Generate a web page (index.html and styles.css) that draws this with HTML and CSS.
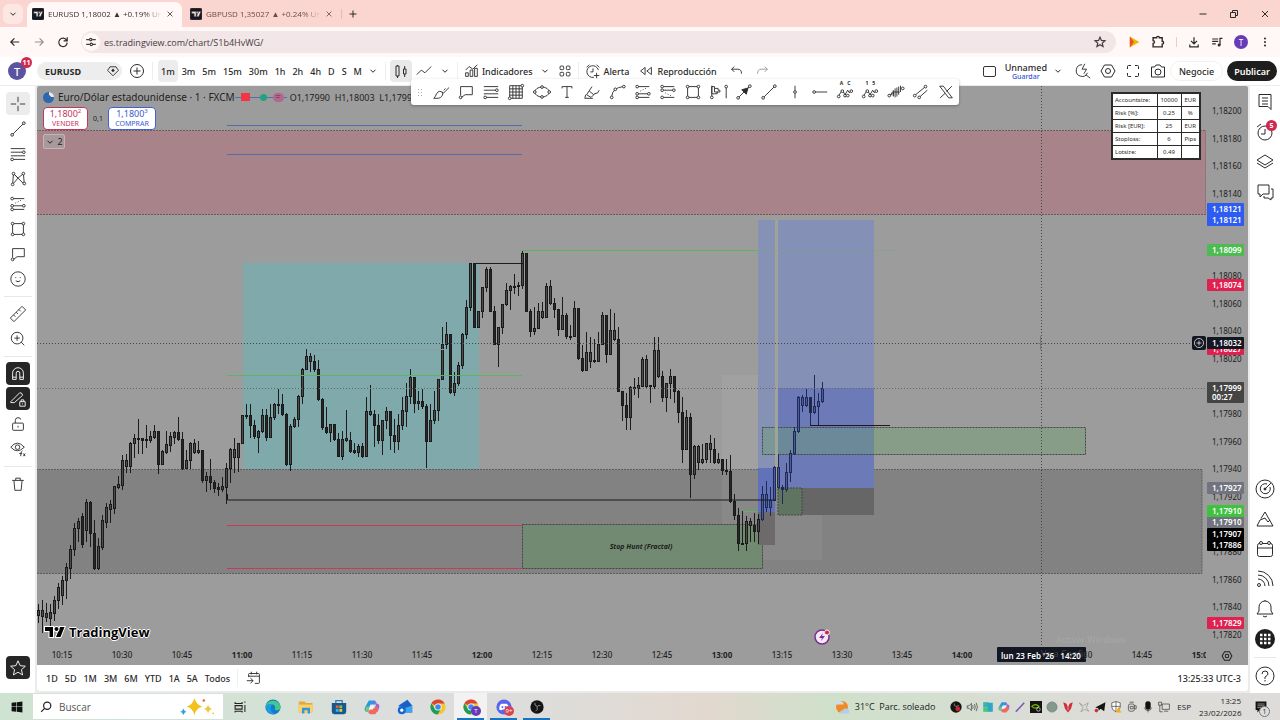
FILE: index.html
```html
<!DOCTYPE html>
<html lang="es">
<head>
    <meta charset="UTF-8">
    <meta name="viewport" content="width=device-width, initial-scale=1.0">
    <title>EURUSD 1,18002</title>
    <link rel="stylesheet" href="styles.css">
</head>
<body>
    <!-- Icon set, every symbol is drawn on a 20x20 grid -->
    <svg class="sprite" aria-hidden="true">
        <symbol id="i-logo" viewBox="0 0 20 20"><rect width="20" height="20" rx="3" fill="#131722"/><path d="M3 6h7v8H7V9H3zM14.5 6H18l-3.5 8H11z" fill="#fff"/><circle cx="12" cy="7.5" r="1.5" fill="#fff"/></symbol>
        <symbol id="i-down" viewBox="0 0 20 20"><path d="M5 7.5l5 5 5-5"/></symbol>
        <symbol id="i-close" viewBox="0 0 20 20"><path d="M4 4l12 12M16 4L4 16"/></symbol>
        <symbol id="i-plus" viewBox="0 0 20 20"><path d="M10 3v14M3 10h14"/></symbol>
        <symbol id="i-min" viewBox="0 0 20 20"><path d="M3 10h14"/></symbol>
        <symbol id="i-restore" viewBox="0 0 20 20"><path d="M3 7h10v10H3zM7 7V3h10v10h-4"/></symbol>
        <symbol id="i-back" viewBox="0 0 20 20"><path d="M17 10H3M9 4l-6 6 6 6"/></symbol>
        <symbol id="i-forward" viewBox="0 0 20 20"><path d="M3 10h14M11 4l6 6-6 6"/></symbol>
        <symbol id="i-reload" viewBox="0 0 20 20"><path d="M16 7a7 7 0 1 0 1 4M17 2v6h-6"/></symbol>
        <symbol id="i-tune" viewBox="0 0 20 20"><path d="M2 6h5M12 6h6M2 14h6M13 14h5"/><circle cx="9.5" cy="6" r="2"/><circle cx="10.5" cy="14" r="2"/></symbol>
        <symbol id="i-star" viewBox="0 0 20 20"><path d="M10 2l2.400 5.400 5.800.6-4.400 3.900 1.300 5.800L10 14.700l-5.100 3 1.300-5.800L1.800 8l5.800-.6z"/></symbol>
        <symbol id="i-puzzle" viewBox="0 0 20 20"><path d="M3 4h5a2 2 0 0 1 4 0h4v5a2 2 0 0 1 0 4v4H3v-5a2 2 0 0 0 0-4z"/></symbol>
        <symbol id="i-download" viewBox="0 0 20 20"><path d="M10 2v11M5 8l5 5 5-5M3 14v4h14v-4"/></symbol>
        <symbol id="i-queue" viewBox="0 0 20 20"><path d="M2 5h10M2 9h10M2 13h6M15 15V4h4"/><circle cx="13.5" cy="15" r="1.5"/></symbol>
        <symbol id="i-dots" viewBox="0 0 20 20"><g fill="currentColor" stroke="none"><circle cx="10" cy="4" r="1.7"/><circle cx="10" cy="10" r="1.7"/><circle cx="10" cy="16" r="1.7"/></g></symbol>
        <symbol id="i-gem" viewBox="0 0 20 20"><path d="M5 3h10l4 6-9 9-9-9z" stroke-width="1.5"/><path d="M7 9l3 3 3-3-3-3z" fill="currentColor" stroke="none"/></symbol>
        <symbol id="i-add" viewBox="0 0 20 20"><circle cx="10" cy="10" r="6.5"/><path d="M10 6.5v7M6.5 10h7"/></symbol>
        <symbol id="i-candles" viewBox="0 0 20 20"><path d="M5 5h3v10H5zM6.5 4v1M6.5 15v2M12.500 8h2.500v5h-2.500zM13.7 5v3M13.7 13v3"/></symbol>
        <symbol id="i-line" viewBox="0 0 20 20"><path d="M2 14l5-5 4 3 7-7"/></symbol>
        <symbol id="i-indicators" viewBox="0 0 20 20"><path d="M4 9l4-4 4 3 5-5M4 16v-4h3v4zM9 16V9h3v7zM14 16V7h3v9z"/></symbol>
        <symbol id="i-grid" viewBox="0 0 20 20"><rect x="4.500" y="4.500" width="4" height="4" rx="1"/><rect x="11.500" y="4.500" width="4" height="4" rx="1"/><rect x="4.500" y="11.500" width="4" height="4" rx="1"/><rect x="11.500" y="11.500" width="4" height="4" rx="1"/></symbol>
        <symbol id="i-alarm" viewBox="0 0 20 20"><path d="M16 9a6.500 6.500 0 1 0-5 8M10 7v4h-3M3 6l3-3M14 3l3 3M14 12v6M11 15h6"/></symbol>
        <symbol id="i-replay" viewBox="0 0 20 20"><path d="M9 6v8l-5-4zM16 6v8l-5-4z"/></symbol>
        <symbol id="i-undo" viewBox="0 0 20 20"><path d="M7 5L4 8l3 3M4 8h7q4 0 4 5"/></symbol>
        <symbol id="i-redo" viewBox="0 0 20 20"><path d="M13 5l3 3-3 3M16 8H9q-4 0-4 5"/></symbol>
        <symbol id="i-flash" viewBox="0 0 20 20"><path d="M9 3a6.500 6.500 0 1 0 6 9M13 14l5 4M12 2L9 8h5l-3 5"/></symbol>
        <symbol id="i-hex" viewBox="0 0 20 20"><path d="M6.500 4h7l3.500 6-3.500 6h-7L3 10z"/><circle cx="10" cy="10" r="2.500"/></symbol>
        <symbol id="i-full" viewBox="0 0 20 20"><path d="M4.500 8V5.500q0-1 1-1H8M12 4.500h2.500q1 0 1 1V8M15.500 12v2.500q0 1-1 1H12M8 15.500H5.500q-1 0-1-1V12"/></symbol>
        <symbol id="i-camera" viewBox="0 0 20 20"><path d="M3.500 6h3l1.500-2h4l1.500 2h3v10h-13z"/><circle cx="10" cy="11" r="3"/></symbol>
        <!-- drawing tools -->
        <symbol id="i-cross" viewBox="0 0 20 20"><path d="M10 2v6M10 12v6M2 10h6M12 10h6"/></symbol>
        <symbol id="i-trend" viewBox="0 0 20 20"><path d="M4.500 15.500l11-11"/><circle cx="3.500" cy="16.500" r="1.500"/><circle cx="16.500" cy="3.500" r="1.500"/></symbol>
        <symbol id="i-fib" viewBox="0 0 20 20"><path d="M2 4h16M2 8h13M2 12h16M5 16h13"/><circle cx="16.500" cy="8" r="1.500"/><circle cx="3.500" cy="16" r="1.500"/></symbol>
        <symbol id="i-pattern" viewBox="0 0 20 20"><path d="M4 16L5 4l5 5 6-5 1 12-7-7zM5 4l5 5"/><g fill="#fff"><circle cx="4" cy="16" r="1.500"/><circle cx="5" cy="4" r="1.500"/><circle cx="16" cy="4" r="1.500"/><circle cx="17" cy="15" r="1.500"/></g></symbol>
        <symbol id="i-position" viewBox="0 0 20 20"><path d="M4 4h13M4 12h12M4 16h13"/><path d="M7 9l8-4" stroke-dasharray="1 2"/><g fill="#fff"><circle cx="3.500" cy="4" r="1.500"/><circle cx="3.500" cy="12" r="1.500"/><circle cx="16.500" cy="12" r="1.500"/><circle cx="3.500" cy="16" r="1.500"/></g></symbol>
        <symbol id="i-rect" viewBox="0 0 20 20"><path d="M4 4h12v12H4z"/><g fill="#fff"><circle cx="4" cy="4" r="1.500"/><circle cx="16" cy="4" r="1.500"/><circle cx="4" cy="16" r="1.500"/><circle cx="16" cy="16" r="1.500"/></g></symbol>
        <symbol id="i-callout" viewBox="0 0 20 20"><path d="M4 14V4h13v9H9l-4 3"/><circle cx="4" cy="16" r="1.500"/></symbol>
        <symbol id="i-smile" viewBox="0 0 20 20"><circle cx="10" cy="10" r="8"/><path d="M7.500 8v1M12.500 8v1M7.500 12q2.500 2 5 0"/></symbol>
        <symbol id="i-ruler" viewBox="0 0 20 20"><path d="M1.500 14.500l13-13 4 4-13 13zM5 11l2 2M8 8l2 2M11 5l2 2"/></symbol>
        <symbol id="i-zoom" viewBox="0 0 20 20"><circle cx="9" cy="9" r="6.500"/><path d="M13.500 13.500l3.500 3.500M9 6v6M6 9h6"/></symbol>
        <symbol id="i-magnet" viewBox="0 0 20 20"><path d="M4 16V9a6 6 0 0 1 12 0v7h-4V9a2 2 0 0 0-4 0v7zM4 13.500h4M12 13.500h4"/></symbol>
        <symbol id="i-penlock" viewBox="0 0 20 20"><path d="M2 13l10-10q3 0 3 3L6 14H2zM12 13h6v5h-6zM13.500 13v-2h3v2M15 15v1"/></symbol>
        <symbol id="i-lock" viewBox="0 0 20 20"><rect x="4" y="9" width="12" height="8" rx="1"/><path d="M7 9V6q0-3 3-3t3 2M10 12v2"/></symbol>
        <symbol id="i-eye" viewBox="0 0 20 20"><path d="M2 8q7-9 15 0-8 8-15 0z"/><circle cx="9.500" cy="8" r="2.500"/><path d="M15 12q-2 0-2 6M11.500 15h3M16 15l2 3M18 15l-2 3"/></symbol>
        <symbol id="i-trash" viewBox="0 0 20 20"><path d="M3.500 6h13M7.500 6V3.500h5V6M5.500 6l1 11h7l1-11"/></symbol>
        <symbol id="i-brush" viewBox="0 0 20 20"><path d="M2 17q2-2 3-5 3-5 7-1 0 5-5 6zM11 10l2 1 6-6M13 8l2-2"/></symbol>
        <symbol id="i-table" viewBox="0 0 20 20"><path d="M3 3h14v14H3zM6.500 3v14M10 3v14M13.500 3v14M3 6.500h14M3 10h14M3 13.500h14"/><g fill="#fff"><circle cx="17" cy="3" r="1.500"/><circle cx="3" cy="17" r="1.500"/></g></symbol>
        <symbol id="i-ellipse" viewBox="0 0 20 20"><ellipse cx="10" cy="10" rx="8" ry="5.500"/><g fill="#fff"><circle cx="10" cy="4.500" r="1.500"/><circle cx="10" cy="15.500" r="1.500"/><circle cx="2" cy="10" r="1.500"/><circle cx="18" cy="10" r="1.500"/></g></symbol>
        <symbol id="i-text" viewBox="0 0 20 20"><path d="M4.500 6V4h11v2M10 4v12M8 16h4"/></symbol>
        <symbol id="i-marker" viewBox="0 0 20 20"><path d="M10 4l-6 9 5 3 5-5M3 13l-1 4h9M7 9l5 4M13 12q4 0 5-4"/></symbol>
        <symbol id="i-curve" viewBox="0 0 20 20"><path d="M3 15q1-10 13-11"/><g fill="#fff"><circle cx="3" cy="16" r="1.500"/><circle cx="7" cy="7" r="1.500"/><circle cx="16.500" cy="4" r="1.500"/></g></symbol>
        <symbol id="i-short" viewBox="0 0 20 20"><path d="M4 4h13M4 8h12M4 16h13"/><path d="M7 11l8 4" stroke-dasharray="1 2"/><g fill="#fff"><circle cx="3.500" cy="4" r="1.500"/><circle cx="3.500" cy="8" r="1.500"/><circle cx="16.500" cy="8" r="1.500"/><circle cx="3.500" cy="16" r="1.500"/></g></symbol>
        <symbol id="i-profile" viewBox="0 0 20 20"><path d="M2 3v12M2 4h3v2h4v2h2v2H8v2H2zM5 6v4h4M18 5v12"/><g fill="#fff"><circle cx="2" cy="16" r="1.500"/><circle cx="18" cy="4" r="1.500"/></g></symbol>
        <symbol id="i-arrow" viewBox="0 0 20 20"><path d="M4.500 15.500l11-11"/><path d="M14.500 5.500l-7 2 5 5z" fill="currentColor"/><circle cx="3.500" cy="16.500" r="1.500"/><circle cx="16.500" cy="3.500" r="1.500"/></symbol>
        <symbol id="i-vline" viewBox="0 0 20 20"><path d="M10 3v5.500M10 11.500V17"/><circle cx="10" cy="10" r="1.500"/></symbol>
        <symbol id="i-hray" viewBox="0 0 20 20"><path d="M5 10h13"/><circle cx="3.500" cy="10" r="1.500"/></symbol>
        <symbol id="i-wave" viewBox="0 0 20 20"><path d="M3 14l4-6 3 5 3-5 2 3 2-3"/><g fill="#fff"><circle cx="3" cy="15" r="1.500"/><circle cx="7" cy="9" r="1.500"/><circle cx="10" cy="14" r="1.500"/><circle cx="13" cy="14" r="1.500"/><circle cx="17" cy="9" r="1.500"/></g></symbol>
        <symbol id="i-bars" viewBox="0 0 20 20"><path d="M3 13h2v-2h2v4M7 8v6M9 6v10M11 5v10M13 4v9M15 3v7M6 10h8"/><circle cx="2.500" cy="14" r="1.500"/><circle cx="17.500" cy="6" r="1.500"/></symbol>
        <symbol id="i-channel" viewBox="0 0 20 20"><path d="M4 13l11-9M8 16l9-8"/><g fill="#fff"><circle cx="3" cy="14" r="1.500"/><circle cx="15" cy="4" r="1.500"/><circle cx="8" cy="16" r="1.500"/></g></symbol>
        <symbol id="i-x" viewBox="0 0 20 20"><path d="M3 3.500h4l10 13h-4zM16.500 3.500l-6 6M9 11.500l-5.500 5"/></symbol>
        <!-- right rail -->
        <symbol id="i-watch" viewBox="0 0 20 20"><path d="M4 2.500h12v15l-3-3H4zM7 6h6M7 9h6M7 12h6"/></symbol>
        <symbol id="i-clock" viewBox="0 0 20 20"><circle cx="10" cy="11" r="7"/><path d="M10 7v5H6M2 5l4-3M14 2l4 3"/></symbol>
        <symbol id="i-layers" viewBox="0 0 20 20"><path d="M10 3l8 5-8 5-8-5zM2 11l8 5 8-5"/></symbol>
        <symbol id="i-chat" viewBox="0 0 20 20"><path d="M3 3h11v9H8l-3 3v-3H3zM16 7h2v9h-2v2l-3-2H9v-2"/></symbol>
        <symbol id="i-radar" viewBox="0 0 20 20"><circle cx="10" cy="10" r="9"/><path d="M15 8a5 5 0 1 1-3-3M10 10l6-6"/><circle cx="10" cy="10" r="1" fill="currentColor"/></symbol>
        <symbol id="i-pine" viewBox="0 0 20 20"><path d="M2 17h16L10 3 6 9.500M5 11l-3 6M5 11l5-2 3 4 2-2"/></symbol>
        <symbol id="i-cal" viewBox="0 0 20 20"><rect x="2.500" y="4.500" width="15" height="13" rx="2"/><path d="M3 9h14"/><circle cx="6" cy="4" r="1.500" fill="#fff"/><circle cx="14" cy="4" r="1.500" fill="#fff"/></symbol>
        <symbol id="i-feed" viewBox="0 0 20 20"><path d="M3 2a15 15 0 0 1 15 15M3 6a11 11 0 0 1 11 11M3 10a7 7 0 0 1 7 7"/><circle cx="4" cy="16" r="1.500"/></symbol>
        <symbol id="i-bell" viewBox="0 0 20 20"><path d="M2 15h16l-2-3V8a6 6 0 0 0-12 0v4zM8 17q2 2 4 0M10 2V1"/></symbol>
        <symbol id="i-apps" viewBox="0 0 20 20"><circle cx="10" cy="10" r="10" fill="#1e1e1e" stroke="none"/><path d="M5 6h2.500M9 6h2.500M13 6h2.500M5 10h2.500M9 10h2.500M13 10h2.500M5 14h2.500M9 14h2.500M13 14h2.500" stroke="#fff" stroke-width="2.500"/></symbol>
        <symbol id="i-help" viewBox="0 0 20 20"><circle cx="10" cy="10" r="9"/><path d="M7 8q0-3 3-3t3 3q0 1-3 3v2M10 14v1.500"/></symbol>
        <symbol id="i-goto" viewBox="0 0 20 20"><path d="M4 9V6q0-1 1-1h10q1 0 1 1v9q0 1-1 1h-4M4 8h12M7 3v3M13 3v3M2 13h7M6 10l3 3-3 3"/></symbol>
        <symbol id="i-search" viewBox="0 0 20 20"><circle cx="12" cy="8" r="6"/><path d="M8 12l-6 6"/></symbol>
        <!-- taskbar -->
        <symbol id="t-win" viewBox="0 0 20 20"><path d="M1 3l8-1v7H1zM10 2l9-1v8h-9zM1 10h8v8l-8-1zM10 10h9v9l-9-1z" fill="#111" stroke="none"/></symbol>
        <symbol id="t-view" viewBox="0 0 20 20"><path d="M3 3v2h10V3M3 8h10v5H3zM3 18v-2h10v2M17 2v2M17 7v10" stroke-width="1.500"/></symbol>
        <symbol id="t-edge" viewBox="0 0 20 20"><g stroke="none"><circle cx="10" cy="10" r="9.500" fill="#1679c9"/><path d="M1 9a9.500 9.500 0 0 1 18.500 1q0 4-5 4-3 0-2-2 1-4-3-5-5-1-8.500 2z" fill="#42c98b"/><path d="M1 9q4-4 9-2-3 1-3 5 0 4 5 7A9.500 9.500 0 0 1 1 9z" fill="#1b9de2"/></g></symbol>
        <symbol id="t-folder" viewBox="0 0 20 20"><g stroke="none"><path d="M1 3h7l2 2h8v12H1z" fill="#e5aa35"/><path d="M1 7h17v10H1z" fill="#fad26a"/><path d="M5 11h10v7h-3v-4H8v4H5z" fill="#3b93d8"/></g></symbol>
        <symbol id="t-store" viewBox="0 0 20 20"><g stroke="none"><path d="M1 5h18v11q0 3-3 3H4q-3 0-3-3z" fill="#17588f"/><path d="M6 5V2h8v3" stroke="#2b7bbf" stroke-width="1.500"/><path d="M6 8h3.500v3.500H6z" fill="#f05a32"/><path d="M10.500 8H14v3.500h-3.500z" fill="#8bc34a"/><path d="M6 12.500h3.500V16H6z" fill="#29b6f6"/><path d="M10.500 12.500H14V16h-3.500z" fill="#ffca28"/></g></symbol>
        <symbol id="t-copilot" viewBox="0 0 20 20"><g stroke="none"><path d="M6 2h7l2 5H8l-3 9H3q-3-1-2-5z" fill="#289be0"/><path d="M12 2q3 0 4 4h1q3 1 2 5l-2 5h-5l3-9z" fill="#a560d8"/><path d="M9 12l-4 4q1 3 3 3h6l3-4 1-5h-4l-2 2z" fill="#ef6a5d"/><path d="M2 10l5-1-2 7-3-1z" fill="#7cc66b"/><path d="M8 8h5l-2 5H6z" fill="#f4eef8"/></g></symbol>
        <symbol id="t-mail" viewBox="0 0 20 20"><g stroke="none"><path d="M2 8l11-7 6 7v9H5z" fill="#1c5fc4"/><path d="M2 8l9 3 8-3v9H5z" fill="#3fa4f0"/><circle cx="6" cy="14" r="5" fill="#1467cc"/><circle cx="6" cy="14" r="2" fill="#fff"/></g></symbol>
        <symbol id="t-chrome" viewBox="0 0 20 20"><g stroke="none"><circle cx="10" cy="10" r="9.500" fill="#f4c630"/><path d="M10 10L1.800 5.200A9.500 9.500 0 0 1 18.300 5.500H10z" fill="#dc4437"/><path d="M1.800 5.200A9.500 9.500 0 0 0 9.500 19.500L14 12l-8 0z" fill="#1f9d58"/><circle cx="10" cy="10" r="4.500" fill="#fff"/><circle cx="10" cy="10" r="3.500" fill="#4285f4"/></g></symbol>
        <symbol id="t-discord" viewBox="0 0 20 20"><g stroke="none"><circle cx="10" cy="10" r="9.500" fill="#5865f2"/><path d="M4 13q0-6 3-7l6 0q3 1 3 7-3 2-4 0H8q-1 2-4 0z" fill="#fff"/><circle cx="8" cy="10" r="1.200" fill="#5865f2"/><circle cx="12" cy="10" r="1.200" fill="#5865f2"/></g></symbol>
        <symbol id="t-obs" viewBox="0 0 20 20"><circle cx="10" cy="10" r="9.500" fill="#151515" stroke="none"/><path d="M7 4q-1 4 3 5M15 8q-4-1-5 2M8 16q4-2 2-6" stroke="#bbb"/></symbol>
        <symbol id="t-rec" viewBox="0 0 20 20"><circle cx="10" cy="10" r="9.500" fill="#151515" stroke="none"/><path d="M7 4q-1 4 3 5M15 8q-4-1-5 2" stroke="#bbb"/><circle cx="13" cy="13" r="4" fill="#c9252d" stroke="none"/></symbol>
        <symbol id="t-sun" viewBox="0 0 20 20"><g stroke="none"><circle cx="10" cy="10" r="7.500" fill="#f08a24"/><path d="M1 7q0-3 3-3 2-3 5-1 3 0 3 4z" fill="#c9ddf2"/><path d="M8 18q-1-4 3-4 1-3 4-2 3-1 4 3 1 3-3 3z" fill="#b4cdec"/></g></symbol>
        <symbol id="t-spark" viewBox="0 0 40 20"><g stroke="none"><path d="M17 0q2 8 9 10-7 2-9 10-2-8-9-10 7-2 9-10z" fill="#f3c11d"/><path d="M33 8q1 4 5 5-4 1-5 5-1-4-5-5 4-1 5-5z" fill="#f0c63e"/><path d="M4 12q1 4 4 4-3 1-4 4-1-3-4-4 3 0 4-4z" fill="#29a3e0"/><circle cx="28" cy="3" r="1.500" fill="#e0633b"/><circle cx="39" cy="18" r="1" fill="#f3c11d"/></g></symbol>
        <symbol id="t-sound" viewBox="0 0 20 20"><path d="M2 8h3l4-4v12l-4-4H2zM11 7q2 3 0 6M14 5q3 5 0 10M17 3q4 7 0 14"/></symbol>
        <symbol id="t-app" viewBox="0 0 20 20"><g stroke="none"><path d="M2 2h9v9H2z" fill="#37b6b0"/><path d="M9 3h9v15H9z" fill="#2fa5c8"/><path d="M2 11h8v7H2z" fill="#43c77a"/></g></symbol>
        <symbol id="t-feather" viewBox="0 0 20 20"><path d="M3 18L17 3" stroke="#7a55b8" stroke-width="2.500"/></symbol>
        <symbol id="t-nvidia" viewBox="0 0 20 20"><rect width="20" height="20" fill="#151515" stroke="none"/><path d="M3 9q6-6 12 0-6 6-12 0z" stroke="#76b900" stroke-width="2"/><circle cx="14" cy="14" r="3" stroke="#fff"/></symbol>
        <symbol id="t-ball" viewBox="0 0 20 20"><circle cx="10" cy="10" r="8.500" fill="#84998b" stroke="#697a6e"/></symbol>
        <symbol id="t-red" viewBox="0 0 20 20"><path d="M2 2l5 2 3 5 3-5 5-2-3 11-5 6-5-6z" fill="#cf2f3a" stroke="none"/><path d="M10 3v12" stroke="#eee"/></symbol>
        <symbol id="t-bird" viewBox="0 0 20 20"><path d="M2 3l7 5 8-5-3 8 4 6-7-3-6 4 3-7z" stroke="#888"/></symbol>
        <symbol id="t-send" viewBox="0 0 20 20"><path d="M2 11L19 2l-2 15-6-4-3 3-1-4z" fill="#151515" stroke="none"/><circle cx="4" cy="16" r="3" fill="#cf2f3a" stroke="none"/></symbol>
        <symbol id="t-shield" viewBox="0 0 20 20"><path d="M3 3l7-2 7 2v7q0 5-7 8-7-3-7-8zM10 1v17M3 9h14" fill="#fff"/><path d="M14 10l5 9H9z" fill="#f2b01e" stroke="none"/></symbol>
        <symbol id="t-usb" viewBox="0 0 20 20"><rect x="4" y="5" width="10" height="12" rx="3"/><path d="M6 2h7M7 9h5v4H7zM14 8h3v5h-3"/></symbol>
        <symbol id="t-mic" viewBox="0 0 20 20"><rect x="6" y="1" width="8" height="13" rx="3" fill="#111"/><path d="M4 11q1 5 6 5t6-5M10 16v3"/></symbol>
        <symbol id="t-net" viewBox="0 0 20 20"><path d="M7 5h12v9H7zM10 17h7M1 2h5v5H1zM3 7v11h5"/></symbol>
        <symbol id="t-note" viewBox="0 0 20 20"><path d="M1 1h18v14H8l-4 4v-4H1z" fill="#111" stroke="none"/><path d="M4 5h12M4 8h12M4 11h8" stroke="#ddd"/></symbol>
    </svg>

    <!-- Browser tabs -->
    <div class="tabs">
        <button class="tab-menu" aria-label="Buscar pestañas"><svg class="ic s10 bold"><use href="#i-down"/></svg></button>
        <div class="tab active">
            <svg class="ic s12"><use href="#i-logo"/></svg>
            <span class="tab-title">EURUSD 1,18002 ▲ +0.19% Un</span>
            <button aria-label="Cerrar"><svg class="ic s8 bold"><use href="#i-close"/></svg></button>
        </div>
        <div class="tab">
            <svg class="ic s12"><use href="#i-logo"/></svg>
            <span class="tab-title">GBPUSD 1,35027 ▲ +0.24% Un</span>
            <button aria-label="Cerrar"><svg class="ic s8 bold"><use href="#i-close"/></svg></button>
        </div>
        <button class="new-tab" aria-label="Nueva pestaña"><svg class="ic s10 bold"><use href="#i-plus"/></svg></button>
        <div class="window-buttons">
            <button aria-label="Minimizar"><svg class="ic s10 bold"><use href="#i-min"/></svg></button>
            <button aria-label="Restaurar"><svg class="ic s10 bold"><use href="#i-restore"/></svg></button>
            <button aria-label="Cerrar ventana"><svg class="ic s10 bold"><use href="#i-close"/></svg></button>
        </div>
    </div>

    <!-- Address bar -->
    <div class="address">
        <button aria-label="Atrás"><svg class="ic s12 bold"><use href="#i-back"/></svg></button>
        <button class="dim" aria-label="Adelante"><svg class="ic s12 bold"><use href="#i-forward"/></svg></button>
        <button aria-label="Recargar"><svg class="ic s12 bold"><use href="#i-reload"/></svg></button>
        <div class="url">
            <button class="site-info" aria-label="Información del sitio"><svg class="ic s12 bold"><use href="#i-tune"/></svg></button>
            <input type="text" aria-label="Dirección" value="es.tradingview.com/chart/S1b4HvWG/">
            <button aria-label="Favorito"><svg class="ic s12 bold"><use href="#i-star"/></svg></button>
        </div>
        <div class="extensions">
            <button aria-label="Reproductor"><svg class="ic s12" viewBox="0 0 20 20"><path d="M3 1v18l16-9z" fill="#f4b400" stroke="none"/><path d="M3 1v18l7-9z" fill="#e2532f" stroke="none"/></svg></button>
            <button aria-label="Extensiones"><svg class="ic s14 bold"><use href="#i-puzzle"/></svg></button>
            <span class="ext-divider"></span>
            <button aria-label="Descargas"><svg class="ic s12 bold"><use href="#i-download"/></svg></button>
            <button aria-label="Multimedia"><svg class="ic s12 bold"><use href="#i-queue"/></svg></button>
            <button class="profile" aria-label="Perfil">T</button>
            <button aria-label="Menú"><svg class="ic s12"><use href="#i-dots"/></svg></button>
        </div>
    </div>

    <!-- Chart toolbar -->
    <header class="toolbar">
        <button class="avatar" aria-label="Cuenta">T<span class="badge">11</span></button>
        <button class="symbol">EURUSD <svg class="ic s12"><use href="#i-gem"/></svg></button>
        <button class="tool" aria-label="Comparar"><svg class="ic s20"><use href="#i-add"/></svg></button>
        <span class="divider"></span>
        <div class="intervals">
            <button class="on">1m</button><button>3m</button><button>5m</button><button>15m</button><button>30m</button><button>1h</button><button>2h</button><button>4h</button><button>D</button><button>S</button><button>M</button>
        </div>
        <button class="caret" aria-label="Intervalos"><svg class="ic s10 bold"><use href="#i-down"/></svg></button>
        <span class="divider"></span>
        <button class="tool on" aria-label="Velas"><svg class="ic s20"><use href="#i-candles"/></svg></button>
        <button class="tool" aria-label="Línea"><svg class="ic s18"><use href="#i-line"/></svg></button>
        <button class="caret" aria-label="Tipos de gráfico"><svg class="ic s10 bold"><use href="#i-down"/></svg></button>
        <span class="divider"></span>
        <button class="labelled"><svg class="ic s18"><use href="#i-indicators"/></svg>Indicadores</button>
        <button class="caret" aria-label="Favoritos"><svg class="ic s10 bold"><use href="#i-down"/></svg></button>
        <button class="tool" aria-label="Plantillas"><svg class="ic s18"><use href="#i-grid"/></svg></button>
        <span class="divider"></span>
        <button class="labelled"><svg class="ic s18"><use href="#i-alarm"/></svg>Alerta</button>
        <button class="labelled"><svg class="ic s18"><use href="#i-replay"/></svg>Reproducción</button>
        <button class="tool" aria-label="Deshacer"><svg class="ic s18"><use href="#i-undo"/></svg></button>
        <button class="tool dim" aria-label="Rehacer"><svg class="ic s18"><use href="#i-redo"/></svg></button>
        <div class="toolbar-right">
            <button class="tool" aria-label="Diseño"><span class="layout-box"></span></button>
            <button class="layout-name">Unnamed<small>Guardar</small></button>
            <button class="caret" aria-label="Diseños"><svg class="ic s10 bold"><use href="#i-down"/></svg></button>
            <button class="tool" aria-label="Búsqueda rápida"><svg class="ic s18"><use href="#i-flash"/></svg></button>
            <button class="tool" aria-label="Configuración"><svg class="ic s20"><use href="#i-hex"/></svg></button>
            <button class="tool" aria-label="Pantalla completa"><svg class="ic s20"><use href="#i-full"/></svg></button>
            <button class="tool" aria-label="Captura"><svg class="ic s20"><use href="#i-camera"/></svg></button>
            <button class="trade">Negocie</button>
            <button class="publish">Publicar</button>
        </div>
    </header>

    <main class="workspace">
        <nav class="left-rail" id="leftRail"></nav>

        <div class="center">
            <section class="chart">
                <svg class="pane" id="pane">
                    <g id="scene" transform="translate(-37 -86)">
                        <!-- zones -->
                        <rect x="30" y="130.500" width="1176" height="84" class="zone supply"/>
                        <rect x="30" y="469.500" width="1172" height="104" class="zone demand"/>
                        <rect x="243" y="263" width="236" height="206" fill="#80a9ac"/>
                        <rect x="722" y="375" width="100" height="185" fill="#fff" opacity="0.050"/>
                        <rect x="522.500" y="524.500" width="240" height="44" class="zone green-dark"/>
                        <rect x="758" y="220" width="17" height="248" fill="#8591b5"/>
                        <rect x="758" y="468" width="17" height="44" fill="#6272ba"/>
                        <rect x="758" y="512" width="17" height="33" fill="#6d6a6c"/>
                        <rect x="778" y="220" width="96" height="168" fill="#8490b5"/>
                        <rect x="778" y="388" width="96" height="100" fill="#6c7bb8"/>
                        <rect x="778" y="488" width="96" height="27" fill="#666"/>
                        <rect x="778" y="488" width="24" height="27" class="zone green-small"/>
                        <rect x="762.500" y="427.500" width="323" height="27" class="zone green"/>
                        <rect x="775" y="220" width="3" height="268" fill="#a0a497"/>

                        <!-- candles are added here -->
                        <g id="candles"></g>

                        <!-- levels -->
                        <path d="M227 125.500h295M227 154.500h295" stroke="#566ba8"/>
                        <path d="M227 375.500h295M522 250.500h236M743 511.500h15" stroke="#5cb560"/>
                        <path d="M758 250.500h138" stroke="#7fa38c" opacity="0.600"/>
                        <path d="M311 349.500h134" stroke="#8b9fa1"/>
                        <path d="M227 525.500h295M227 568.500h295" stroke="#c43c5a"/>
                        <path d="M475 263.500h48M227.500 494v6h548M810 425.500h80" stroke="#1b1b1b" fill="none"/>
                        <path d="M37 388.500h1169" class="dotted"/>
                        <path d="M37 343.500h1169M1041.500 86v562" class="dotted strong"/>
                        <path d="M1040.500 336v14M1037 343.500h8" stroke="#777"/>
                        <text x="641" y="549" class="zone-text">Stop Hunt (Fractal)</text>

                        <g id="timeLabels"></g>
                        <rect x="997" y="647" width="89" height="15" rx="1" fill="#131722"/>
                        <text x="1041" y="659" class="time-tag">lun 23 Feb '26 &#160; 14:20</text>
                        <text x="1056" y="643" class="ghost">Activar Windows</text>
                        <text x="1041" y="657" class="ghost">Ve a Config</text>
                        <g transform="translate(822 637)">
                            <circle r="7" fill="#f4e9f7" stroke="#7b2d93" stroke-width="1.500"/>
                            <path d="M1 -4l-4 5h3l-1 3 4-5H0z" fill="#7b2d93"/>
                            <circle cx="5" cy="-4.500" r="2.500" fill="#d0284f" stroke="#eee"/>
                        </g>
                    </g>
                </svg>
                <svg class="axis" id="axis">
                    <g id="axisScene" transform="translate(0 -86)"></g>
                </svg>

                <div class="legend">
                    <div class="legend-title">
                        <span class="pair"></span>
                        <span>Euro/Dólar estadounidense · 1 · FXCM</span>
                        <span class="marks"><i class="flag"></i><i class="dot"></i><i class="eq">=</i></span>
                        <span class="ohlc">O1,17990 &#160;H1,18003 &#160;L1,17990</span>
                    </div>
                    <div class="quotes">
                        <button class="sell">1,1800<sup>2</sup><span>VENDER</span></button>
                        <span class="spread">0,1</span>
                        <button class="buy">1,1800<sup>3</sup><span>COMPRAR</span></button>
                    </div>
                    <button class="collapse"><svg class="ic s10 bold"><use href="#i-down"/></svg>2</button>
                </div>

                <table class="risk">
                    <tr><td>Accountsize:</td><td>10000</td><td>EUR</td></tr>
                    <tr><td>Risk [%]:</td><td>0.25</td><td>%</td></tr>
                    <tr><td>Risk [EUR]:</td><td>25</td><td>EUR</td></tr>
                    <tr><td>Stoploss:</td><td>6</td><td>Pips</td></tr>
                    <tr><td>Lotsize:</td><td>0.49</td><td></td></tr>
                </table>

                <a class="brand" href="#">
                    <svg viewBox="0 0 20 12"><path d="M0 1h8v10H4.500V5H0zM15 1h4.500L15.500 11H11z"/><circle cx="11.500" cy="3" r="2"/></svg>TradingView
                </a>
                <button class="add-alert" aria-label="Añadir"><svg class="ic s14"><use href="#i-add"/></svg></button>
            </section>

            <footer class="ranges">
                <button>1D</button><button>5D</button><button>1M</button><button>3M</button><button>6M</button><button>YTD</button><button>1A</button><button>5A</button><button>Todos</button>
                <span class="divider"></span>
                <button aria-label="Ir a"><svg class="ic s18"><use href="#i-goto"/></svg></button>
                <span class="utc">13:25:33 UTC-3</span>
            </footer>
        </div>

        <nav class="right-rail" id="rightRail"></nav>
    </main>

    <!-- Favourite drawing tools, floats over the chart -->
    <div class="favorites" id="favorites"><span class="grip"></span></div>

    <!-- Windows taskbar -->
    <div class="taskbar">
        <button class="start" aria-label="Inicio"><svg class="ic s12"><use href="#t-win"/></svg></button>
        <label class="search"><svg class="ic s12 bold"><use href="#i-search"/></svg><input type="text" placeholder="Buscar" aria-label="Buscar"><svg class="spark"><use href="#t-spark"/></svg></label>
        <div class="apps">
            <button aria-label="Vista de tareas"><svg class="ic s14"><use href="#t-view"/></svg></button>
            <button aria-label="Edge"><svg class="ic s16"><use href="#t-edge"/></svg></button>
            <button aria-label="Archivos"><svg class="ic s16"><use href="#t-folder"/></svg></button>
            <button aria-label="Store"><svg class="ic s16"><use href="#t-store"/></svg></button>
            <button aria-label="Copilot"><svg class="ic s16"><use href="#t-copilot"/></svg></button>
            <button aria-label="Correo"><svg class="ic s16"><use href="#t-mail"/></svg></button>
            <button aria-label="Chrome"><svg class="ic s16"><use href="#t-chrome"/></svg></button>
            <button class="open front" aria-label="Chrome perfil"><svg class="ic s16"><use href="#t-chrome"/></svg><span class="app-badge purple">T</span></button>
            <button class="open" aria-label="Discord"><svg class="ic s16"><use href="#t-discord"/></svg><span class="app-badge">9+</span></button>
            <button class="open" aria-label="OBS"><svg class="ic s14"><use href="#t-obs"/></svg></button>
        </div>
        <button class="weather"><svg class="ic s16"><use href="#t-sun"/></svg>31°C&#160; Parc. soleado</button>
        <div class="tray" id="tray"></div>
        <span class="lang">ESP</span>
        <div class="clock">13:25<br>23/02/2026</div>
        <button class="notes" aria-label="Notificaciones"><svg class="ic s12"><use href="#t-note"/></svg><span>1</span></button>
    </div>

    <script src="chart.js"></script>
</body>
</html>
```
FILE: styles.css
```css
* {
    box-sizing: border-box;
}
body {
    margin: 0;
    min-height: 100vh;
    display: flex;
    flex-direction: column;
    position: relative;
    font-family: "Noto Sans", "Open Sans", sans-serif;
    font-size: 9px;
    color: #2a2a2a;
    background-color: #ebebeb;
    overflow: hidden;
}
button {
    font: inherit;
    color: inherit;
    background: none;
    border: none;
    padding: 0;
    display: flex;
    align-items: center;
    justify-content: center;
    flex: none;
    cursor: pointer;
}
input {
    font: inherit;
    color: inherit;
    border: none;
    background: none;
    padding: 0;
    min-width: 0;
    outline: none;
}
.sprite {
    display: none;
}
.ic {
    flex: none;
    fill: none;
    stroke: currentColor;
    stroke-width: 1;
}
.bold { stroke-width: 2; }
.s8 { width: 8px; height: 8px; }
.s10 { width: 10px; height: 10px; }
.s12 { width: 12px; height: 12px; }
.s14 { width: 14px; height: 14px; }
.s16 { width: 16px; height: 16px; }
.s18 { width: 18px; height: 18px; }
.s20 { width: 20px; height: 20px; }
.dim { opacity: 0.5; }

/* Browser tabs */
.tabs {
    height: 27px;
    flex: none;
    display: flex;
    align-items: center;
    padding-left: 3px;
    background-color: #fbd6d0;
    font-family: "Open Sans", sans-serif;
}
.tab-menu {
    width: 20px;
    height: 20px;
    border-radius: 6px;
    background-color: #fde7e3;
    margin-right: 4px;
}
.tab {
    display: flex;
    align-items: center;
    width: 159px;
    height: 25px;
    align-self: flex-end;
    padding: 0 8px 2px;
    gap: 4px;
    color: #6b4c4a;
}
.tab.active {
    width: 155px;
    padding-left: 5px;
    background-color: #fff8f6;
    border-radius: 7px 7px 0 0;
    color: #3a3033;
}
.tab-title {
    flex: 1;
    min-width: 0;
    font-size: 8px;
    white-space: nowrap;
    -webkit-mask-image: linear-gradient(90deg, #000 85%, transparent);
    mask-image: linear-gradient(90deg, #000 85%, transparent);
}
.new-tab {
    border-left: 1px solid #e5b9b4;
    padding-left: 6px;
}
.window-buttons {
    margin-left: auto;
    display: flex;
    gap: 21px;
    padding-right: 10px;
}

/* Address bar */
.address {
    height: 30px;
    flex: none;
    display: flex;
    align-items: center;
    gap: 12px;
    padding: 0 9px;
    background-color: #fff8f6;
}
.url {
    flex: 1;
    display: flex;
    align-items: center;
    height: 22px;
    border-radius: 11px;
    background-color: #f3e6e8;
    padding: 0 10px 0 1px;
    font-family: "Open Sans", sans-serif;
    color: #443c40;
}
.url input {
    flex: 1;
    margin-left: 4px;
}
.site-info {
    width: 18px;
    height: 18px;
    border-radius: 9px;
    background-color: #fff8f6;
}
.extensions {
    display: flex;
    align-items: center;
    gap: 11px;
}
.ext-divider {
    width: 1px;
    height: 10px;
    background-color: #f3c9c6;
}
.profile {
    width: 14px;
    height: 14px;
    border-radius: 7px;
    background-color: #673ab7;
    color: #fff;
    font-size: 8px;
}

/* Chart toolbar */
.toolbar {
    height: 28px;
    flex: none;
    display: flex;
    align-items: center;
    padding: 0 3px 0 8px;
    background-color: #fff;
    font-weight: 500;
}
.avatar {
    position: relative;
    width: 18px;
    height: 18px;
    border-radius: 9px;
    background-color: #5a54a0;
    color: #fff;
    font-size: 11px;
    margin-right: 11px;
}
.badge {
    position: absolute;
    top: -5px;
    right: -6px;
    min-width: 11px;
    height: 11px;
    line-height: 11px;
    border-radius: 6px;
    background-color: #d0284f;
    color: #fff;
    font-size: 7px;
    font-weight: bold;
}
.symbol {
    width: 85px;
    height: 18px;
    border-radius: 9px;
    background-color: #ededed;
    padding: 0 3px 0 8px;
    justify-content: space-between;
    font-weight: bold;
}
.tool {
    width: 25px;
    height: 22px;
}
.tool.on {
    width: 22px;
    background-color: #e9e9e9;
    border-radius: 4px;
}
.toolbar .symbol + .tool {
    width: 30px;
}
.divider {
    width: 1px;
    height: 18px;
    background-color: #eee;
    margin: 0 5px 0 0;
}
.toolbar .caret + .divider {
    margin: 0 4px;
}
.intervals {
    display: flex;
    gap: 1px;
}
.intervals button {
    height: 22px;
    padding: 0 3px;
    border-radius: 4px;
}
.intervals .on {
    background-color: #ececec;
}
.caret {
    width: 16px;
    height: 22px;
}
.labelled {
    gap: 2px;
    margin-right: 8px;
}
.labelled + .caret {
    margin-left: -4px;
}
.toolbar-right {
    margin-left: auto;
    display: flex;
    align-items: center;
}
.layout-box {
    width: 13px;
    height: 11px;
    border: 1px solid #333;
    border-radius: 2px;
}
.layout-name {
    flex-direction: column;
    line-height: 10px;
    margin: 0 3px;
}
.layout-name small {
    font-size: 7px;
    line-height: 7px;
    color: #3355d8;
}
.layout-name + .caret {
    margin-right: 4px;
}
.trade {
    width: 53px;
    height: 20px;
    border: 1px solid #f0f0f0;
    border-radius: 10px;
}
.publish {
    width: 50px;
    height: 20px;
    border-radius: 10px;
    background-color: #1e1e1e;
    color: #fff;
    font-weight: 600;
    margin-left: 4px;
}

/* Workspace */
.workspace {
    flex: 1;
    display: flex;
    gap: 2px;
    padding-top: 1px;
    min-height: 0;
}
.left-rail, .right-rail {
    display: flex;
    flex-direction: column;
    align-items: center;
    background-color: #fff;
    flex: none;
}
.left-rail {
    width: 35px;
    padding: 6px 0 12px;
}
.left-rail button {
    width: 24px;
    height: 23px;
    margin-bottom: 2px;
    border-radius: 4px;
}
.left-rail .on {
    background-color: #ececec;
}
.left-rail .dark {
    background-color: #262626;
    color: #fff;
}
.left-rail hr {
    width: 28px;
    margin: 4px 0 5px;
    border: none;
    border-top: 1px solid #e8e8e8;
}
.left-rail .last, .right-rail .push {
    margin-top: auto;
}
.right-rail {
    width: 30px;
    padding: 1px 0 2px;
}
.right-rail button {
    position: relative;
    width: 30px;
    height: 30px;
}
.right-rail hr {
    width: 22px;
    margin: 3px 0;
    border: none;
    border-top: 1px solid #e8e8e8;
}
.right-rail .badge {
    top: 3px;
    right: 3px;
}
.center {
    flex: 1;
    min-width: 0;
    display: flex;
    flex-direction: column;
    padding-bottom: 2px;
}
.chart {
    position: relative;
    flex: 1;
    min-height: 0;
    display: flex;
    background-color: #9c9c9c;
    border-radius: 2px 2px 0 0;
    overflow: hidden;
}
.pane {
    flex: 1;
    min-width: 0;
    height: 100%;
}
.axis {
    width: 42px;
    height: 100%;
    flex: none;
}
.zone {
    stroke: #444;
    stroke-dasharray: 2 1;
}
.supply {
    fill: #a88389;
    stroke: #6b5a5d;
}
.demand {
    fill: #828282;
    stroke: #5c5c5c;
}
.green-dark {
    fill: #738a72;
}
.green-small {
    fill: #5f7561;
}
.green {
    fill: #6ba06b;
    fill-opacity: 0.4;
}
.dotted {
    stroke: #666;
    stroke-dasharray: 1 2;
}
.strong {
    stroke: #444;
}
.wick {
    stroke: #1c1c1c;
}
.body {
    stroke: #1a1a1a;
}
.rise { fill: #4c4c4c; }
.fall { fill: #262626; }
/* candles inside the blue position boxes */
.tinted .wick, .tinted .body {
    stroke: #202a56;
}
.tinted .rise { fill: #4a5c9c; }
.zone-text {
    font-size: 7px;
    font-weight: bold;
    font-style: italic;
    text-anchor: middle;
    fill: #1a1f1a;
}
.time-label {
    font-size: 8px;
    font-weight: 500;
    text-anchor: middle;
    fill: #222;
}
.time-label.hour {
    font-weight: bold;
}
.time-tag {
    font-size: 8px;
    font-weight: 600;
    text-anchor: middle;
    fill: #fff;
}
.ghost {
    font-size: 9px;
    fill: #c8c8c8;
    opacity: 0.25;
}
.price {
    font-size: 8px;
    fill: #1c1c1c;
}
.price.tag {
    fill: #fff;
    font-weight: 600;
}

/* Chart overlays */
.legend {
    position: absolute;
    top: 4px;
    left: 6px;
    color: #222;
}
.legend-title {
    display: flex;
    align-items: center;
    height: 14px;
    font-size: 10px;
    white-space: nowrap;
}
.pair {
    width: 11px;
    height: 11px;
    border-radius: 6px;
    margin-right: 4px;
    background: radial-gradient(circle at 85% 15%, #f1e7ea 25%, transparent 26%), #2d67ae;
}
.marks {
    display: flex;
    align-items: center;
    gap: 6px;
    width: 52px;
    padding-left: 6px;
    background: linear-gradient(#4f6fb5, #4f6fb5) center / 100% 1px no-repeat;
}
.marks i {
    font-style: normal;
}
.flag {
    width: 9px;
    height: 8px;
    background-color: #f23645;
}
.dot {
    width: 7px;
    height: 7px;
    margin-left: 4px;
    border-radius: 4px;
    background-color: #22a27e;
}
.eq {
    width: 11px;
    height: 9px;
    line-height: 8px;
    border-radius: 5px;
    background-color: #b0688d;
    color: #8d1551;
    font-size: 9px;
    text-align: center;
}
.ohlc {
    font-size: 9px;
    margin-left: 3px;
}
.quotes {
    display: flex;
    align-items: center;
    margin-top: 3px;
}
.sell, .buy {
    display: block;
    height: 23px;
    width: 45px;
    border: 1px solid #c6355a;
    border-radius: 4px;
    background-color: #fff;
    color: #c6355a;
    font-size: 9px;
    line-height: 10px;
    text-align: center;
}
.buy {
    width: 48px;
    border-color: #4460d6;
    color: #3c5ad0;
}
.sell span, .buy span {
    display: block;
    font-size: 7px;
    line-height: 9px;
}
sup {
    font-size: 6px;
    line-height: 0;
}
.spread {
    width: 20px;
    text-align: center;
    font-size: 7px;
}
.collapse {
    width: 22px;
    height: 15px;
    gap: 2px;
    margin-top: 4px;
    border: 1px solid #c9b3b6;
    border-radius: 2px;
    background-color: #a89a9c;
    font-size: 9px;
}
.risk {
    position: absolute;
    top: 6px;
    right: 47px;
    border-collapse: collapse;
    border: 2px solid #2b2b2b;
    background-color: #fff;
    font-size: 6px;
    line-height: 12px;
}
.risk td {
    height: 13px;
    padding: 0 2px;
    border: 1px solid #2b2b2b;
    text-align: center;
}
.risk td:first-child {
    width: 45px;
    text-align: left;
}
.risk td:nth-child(2) { width: 24px; }
.risk td:nth-child(3) { width: 19px; }
.brand {
    position: absolute;
    left: 8px;
    bottom: 25px;
    display: flex;
    align-items: center;
    gap: 4px;
    font-family: "Open Sans", sans-serif;
    font-size: 13px;
    line-height: 16px;
    font-weight: bold;
    color: #000;
    text-decoration: none;
    text-shadow: 1px 0 #fff, -1px 0 #fff, 0 1px #fff, 0 -1px #fff;
}
.brand svg {
    width: 20px;
    height: 12px;
    overflow: visible;
    stroke: #fff;
    stroke-width: 2;
    paint-order: stroke;
}
.add-alert {
    position: absolute;
    top: 250px;
    right: 42px;
    width: 14px;
    height: 14px;
    border-radius: 2px;
    background-color: #131722;
    color: #fff;
}
.ranges {
    height: 26px;
    flex: none;
    display: flex;
    align-items: center;
    gap: 1px;
    padding: 0 7px 0 6px;
    background-color: #fff;
    border-radius: 0 0 3px 3px;
    font-weight: 500;
}
.ranges button {
    padding: 0 3px;
    height: 20px;
}
.ranges .divider {
    margin: 0 3px;
}
.utc {
    margin-left: auto;
}

/* Floating drawing tools */
.favorites {
    position: absolute;
    top: 79px;
    left: 411px;
    width: 548px;
    height: 26px;
    display: flex;
    align-items: center;
    background-color: #fff;
    border-radius: 3px;
    box-shadow: 0 1px 3px rgba(0, 0, 0, 0.3);
}
.favorites button {
    position: relative;
    flex: 1;
}
.favorites b {
    position: absolute;
    top: -3px;
    font-size: 5px;
    line-height: 6px;
    white-space: pre;
}
.grip {
    width: 5px;
    height: 9px;
    margin: 0 6px;
    background: radial-gradient(circle, #aaa 1px, transparent 1px) 0 0 / 3px 3px;
}

/* Taskbar */
.taskbar {
    height: 27px;
    flex: none;
    display: flex;
    align-items: center;
    background: linear-gradient(90deg, #cfe3d2 0, #d4e2d6 20%, #dcdedd 30%, #dddddb 42%, #e2d8cf 55%, #cfe0ca 65%, #d3dfcf 72%, #dddcd8 85%, #dddcda);
    font-family: "Open Sans", sans-serif;
    color: #222;
}
.taskbar > * {
    flex: none;
}
.start {
    width: 33px;
    height: 27px;
}
.search {
    display: flex;
    align-items: center;
    width: 190px;
    height: 25px;
    padding: 0 6px 0 7px;
    gap: 7px;
    background-color: #fff;
    font-size: 10px;
}
.search input {
    flex: 1;
}
.search input::placeholder {
    color: #555;
}
.spark {
    width: 40px;
    height: 17px;
}
.apps {
    display: flex;
    height: 27px;
}
.apps button {
    position: relative;
    width: 33px;
    height: 27px;
}
.open::after {
    content: "";
    position: absolute;
    left: 3px;
    right: 3px;
    bottom: 0;
    height: 2px;
    background-color: #1874c0;
}
.front {
    background-color: #f2f2f2;
}
.app-badge {
    position: absolute;
    right: 6px;
    bottom: 4px;
    width: 10px;
    height: 10px;
    line-height: 10px;
    border-radius: 5px;
    background-color: #d64550;
    color: #fff;
    font-size: 6px;
}
.purple {
    background-color: #673ab7;
}
.weather {
    margin-left: auto;
    gap: 5px;
}
.tray {
    display: flex;
    align-items: center;
    gap: 4px;
    margin: 0 7px 0 15px;
}
.lang {
    font-size: 8px;
    margin-right: 8px;
}
.clock {
    font-size: 8px;
    line-height: 12px;
    text-align: right;
    width: 42px;
}
.notes {
    position: relative;
    width: 39px;
    height: 27px;
}
.notes span {
    position: absolute;
    right: 10px;
    bottom: 3px;
    width: 11px;
    height: 11px;
    line-height: 9px;
    border: 1px solid #777;
    border-radius: 6px;
    background-color: #ddd;
    font-size: 7px;
}
```
FILE: chart.js
```js
var NS = 'http://www.w3.org/2000/svg';

function add(parent, tag, attrs, text) {
    var el = document.createElementNS(NS, tag);
    for (var key in attrs) {
        el.setAttribute(key, attrs[key]);
    }
    if (text) el.textContent = text;
    parent.appendChild(el);
    return el;
}

// One candle per minute from 10:09: high, body top, body bottom, low
var candles = [
    [604,610,615,622],[600,610,616,632],[603,613,617,621],[604,612,618,625],[596,600,613,620],[583,587,600,608],
    [576,580,595,604],[563,567,580,598],[545,549,568,578],[523,528,549,555],[518,521,528,541],[513,516,544,547],
    [499,502,530,541],[501,502,533,546],[520,533,568,569],[538,546,568,569],[515,520,547,549],[503,507,522,527],
    [500,504,509,522],[486,486,508,513],[476,484,487,488],[455,460,485,489],[454,460,466,472],[442,443,466,472],
    [434,438,443,457],[419,438,439,453],[438,438,440,453],[425,439,440,447],[431,436,440,442],[425,431,437,438],
    [431,431,464,473],[450,451,464,464],[431,444,452,453],[432,436,445,451],[431,432,437,443],[417,432,439,440],
    [432,439,468,469],[450,460,468,468],[442,443,460,468],[439,443,452,453],[441,450,452,453],[450,450,480,482],
    [472,476,480,491],[459,476,482,489],[480,482,488,492],[483,487,489,495],[477,486,489,491],[463,468,487,503],
    [448,449,468,482],[438,449,457,472],[443,443,457,471],[415,415,443,443],[404,415,416,418],[404,415,425,437],
    [420,425,436,438],[430,431,437,452],[409,415,431,432],[409,415,437,440],[404,417,437,437],[403,404,417,419],
    [389,404,405,413],[394,404,414,415],[413,414,464,465],[424,426,464,470],[417,419,426,427],[395,396,419,426],
    [368,369,396,403],[349,356,369,369],[353,356,361,371],[355,361,369,371],[360,369,399,400],[398,399,427,429],
    [407,427,432,433],[424,424,432,441],[424,424,439,440],[433,439,456,456],[431,439,456,459],[410,438,440,441],
    [432,440,451,452],[443,450,452,453],[444,446,452,456],[443,446,456,457],[397,411,456,456],[385,411,414,415],
    [410,414,425,446],[414,425,440,443],[420,420,440,454],[407,411,420,428],[411,411,435,449],[419,435,441,452],
    [414,425,441,449],[397,410,425,429],[383,396,411,426],[369,377,396,403],[377,377,403,412],[391,401,403,409],
    [389,401,406,408],[404,406,441,467],[404,420,441,441],[391,410,420,423],[379,379,410,420],[327,344,379,379],
    [322,334,344,348],[334,334,392,393],[372,383,392,395],[362,365,383,385],[333,334,365,368],[300,307,334,338],
    [263,263,307,310],[263,263,327,327],[311,311,327,327],[287,287,311,317],[267,269,287,291],[267,269,311,311],
    [306,311,344,344],[327,327,344,366],[304,304,327,333],[283,290,304,305],[285,286,290,309],[274,286,287,293],
    [282,285,286,295],[251,253,285,288],[253,253,311,311],[309,311,331,336],[307,328,331,334],[303,311,328,328],
    [302,311,317,318],[283,286,317,317],[280,286,303,304],[298,303,309,317],[309,309,329,335],[297,315,329,329],
    [313,315,336,338],[325,336,337,339],[301,308,336,336],[308,308,358,359],[345,358,370,371],[332,352,370,370],
    [337,352,361,367],[339,360,361,362],[332,344,361,361],[312,315,344,344],[315,315,354,362],[309,330,354,354],
    [313,330,339,340],[327,339,391,391],[391,391,405,420],[393,405,417,429],[386,387,417,429],[378,387,388,394],
    [377,385,388,397],[357,359,386,386],[355,359,386,388],[385,385,386,402],[337,350,386,388],[337,350,376,377],
    [371,376,397,401],[383,383,397,411],[369,376,383,398],[376,376,391,402],[390,391,412,422],[397,412,449,462],
    [410,417,449,449],[413,417,474,497],[445,446,474,478],[445,446,462,469],[444,459,462,463],[443,443,459,462],
    [435,443,449,462],[438,449,462,463],[453,459,462,463],[459,459,470,474],[459,470,471,474],[455,471,501,502],
    [494,501,515,519],[508,515,543,550],[511,543,544,544],[516,521,543,550],[518,521,525,541],[513,525,531,541],
    [514,519,531,543],[486,494,519,520],[481,494,507,511],[487,500,507,515],[466,467,500,500],[454,467,487,488],
    [485,487,489,503],[463,472,489,491],[450,453,472,481],[427,431,453,454],[396,397,431,432],[395,397,405,411],
    [389,397,405,406],[397,397,412,425],[375,406,412,413],[393,401,406,424],[382,388,401,402]
];

var group = document.getElementById('candles');
var tinted = add(group, 'g', { 'class': 'tinted' });
candles.forEach(function(c, i) {
    var x = 38 + i * 4;
    var target = x > 758 ? tinted : group;
    var prev = candles[i - 1] || c;
    // A candle that starts at the bottom of the previous one is a falling one
    var falling = Math.abs(c[1] - prev[2]) < 2 || c[2] > prev[2] + 1;
    add(target, 'path', { d: 'M' + (x + 0.5) + ' ' + c[0] + 'V' + (c[3] + 1), 'class': 'wick' });
    add(target, 'rect', {
        x: x - 0.5, y: c[1] + 0.5, width: 2, height: Math.max(c[2] - c[1], 0.5),
        'class': 'body ' + (falling ? 'fall' : 'rise')
    });
});

// Time scale, one label every 15 minutes
var times = document.getElementById('timeLabels');
for (var i = 0; i < 20; i++) {
    var minutes = 615 + i * 15;
    var mm = minutes % 60;
    add(times, 'text', { x: 62 + i * 60, y: 658, 'class': mm ? 'time-label' : 'time-label hour' },
        Math.floor(minutes / 60) + ':' + (mm ? mm : '00'));
}

// Price scale
var axis = document.getElementById('axisScene');
for (var p = 18200; p >= 17820; p -= 20) {
    add(axis, 'text', { x: 6, y: Math.round(110 + (18200 - p) * 1.378) + 4, 'class': 'price' }, '1,' + p);
}
var tags = [
    ['1,18121', 209, '#2f5cf0'], ['1,18121', 220, '#2f5cf0'], ['1,18099', 250, '#4dbb50'], ['1,18074', 285, '#e0204e'],
    ['1,18027', 349, '#e0204e'], ['1,18032', 343, '#131722'], ['1,17927', 488, '#71737e'], ['1,17910', 522, '#71737e'],
    ['1,17910', 511, '#3fc23f'], ['1,17907', 534, '#000'], ['1,17886', 545, '#000'], ['1,17829', 623, '#e0204e']
];
tags.forEach(function(t) {
    add(axis, 'rect', { x: 1, y: t[1] - 6, width: 37, height: 12, rx: 1, fill: t[2] });
    add(axis, 'text', { x: 6, y: t[1] + 3, 'class': 'price tag' }, t[0]);
});
add(axis, 'rect', { x: 1, y: 382, width: 37, height: 21, rx: 1, fill: '#444' });
add(axis, 'text', { x: 6, y: 391, 'class': 'price tag' }, '1,17999');
add(axis, 'text', { x: 6, y: 400, 'class': 'price tag' }, '00:27');
add(axis, 'use', { href: '#i-hex', x: 14, y: 649, width: 14, height: 14, fill: 'none', stroke: '#222', 'stroke-width': 1.5 });

function icon(name, size) {
    return '<svg class="ic s' + size + '"><use href="#' + name + '"/></svg>';
}

// name|class, "-" draws a separator
function fillRail(id, items, size) {
    document.getElementById(id).innerHTML = items.map(function(item) {
        if (item === '-') return '<hr>';
        var parts = item.split('|');
        var badge = parts[0] === 'clock' ? '<span class="badge">5</span>' : '';
        return '<button class="' + (parts[1] || '') + '" aria-label="' + parts[0] + '">' + icon('i-' + parts[0], size) + badge + '</button>';
    }).join('');
}
fillRail('leftRail', ['cross|on', 'trend', 'fib', 'pattern', 'position', 'rect', 'callout', 'smile', '-', 'ruler', 'zoom', '-',
    'magnet|dark', 'penlock|dark', 'lock', 'eye', '-', 'trash', 'star|dark last'], 18);
fillRail('rightRail', ['watch', 'clock', 'layers', 'chat', 'radar|push', 'pine', 'cal', 'feed', 'bell', 'apps', '-', 'help'], 20);

var favorites = ['brush', 'callout', 'fib', 'table', 'ellipse', 'text', 'marker', 'curve', 'position', 'short', 'rect', 'profile',
    'arrow', 'trend', 'vline', 'hray', 'wave:A   C', 'wave:1   5', 'bars', 'channel', 'x'];
document.getElementById('favorites').innerHTML += favorites.map(function(item) {
    var parts = item.split(':');
    var top = parts[1] ? '<b>' + parts[1] + '</b>' : '';
    return '<button aria-label="' + item + '">' + icon('i-' + parts[0], 18) + top + '</button>';
}).join('');

document.getElementById('tray').innerHTML = ['rec', 'sound', 'app', 'copilot', 'feather', 'nvidia', 'ball', 'red', 'bird', 'send',
    'shield', 'usb', 'mic', 'net'].map(function(name) {
    return icon('t-' + name, 12);
}).join('');
```
